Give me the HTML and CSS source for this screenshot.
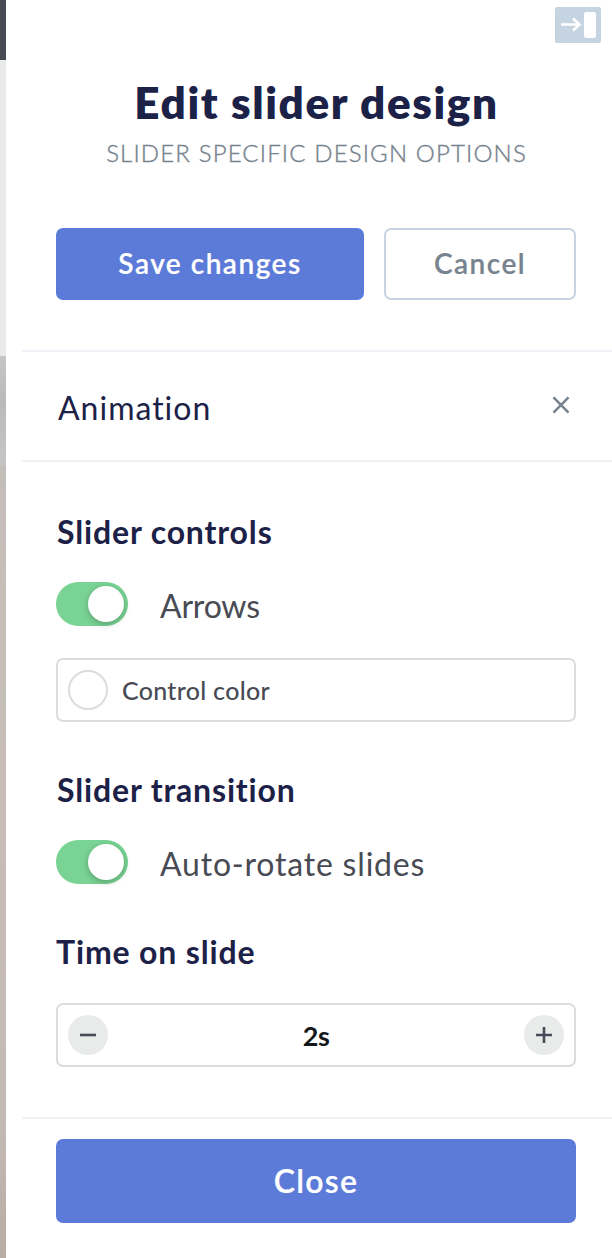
FILE: index.html
```html
<!DOCTYPE html>
<html lang="en">
<head>
  <meta charset="UTF-8">
  <meta name="viewport" content="width=device-width, initial-scale=1">
  <title>Edit slider design</title>
  <link rel="stylesheet" href="styles.css">
</head>

<body>
  <div class="page-edge"></div>

  <div class="panel">
    <div class="top-bar">
      <button type="button" class="collapse" aria-label="Collapse panel">
        <svg width="46" height="36" viewBox="0 0 46 36" fill="none">
          <path d="M6 17.5h18M18 11.5l6.5 6-6.5 6" stroke="#fff" stroke-width="2.6"/>
          <rect x="29" y="5" width="12" height="26" rx="2.5" fill="#fff"/>
        </svg>
      </button>
    </div>

    <header class="header">
      <h1>Edit slider design</h1>
      <p>SLIDER SPECIFIC DESIGN OPTIONS</p>
    </header>

    <div class="actions">
      <button type="button" class="button save">Save changes</button>
      <button type="button" class="button cancel">Cancel</button>
    </div>

    <div class="section-title">
      <span>Animation</span>
      <button type="button" class="icon-button" aria-label="Close section">
        <svg width="18" height="18" viewBox="0 0 18 18" fill="none">
          <path d="M1.5 1.3l15 15.4M16.5 1.3l-15 15.4" stroke="#77838f" stroke-width="2.5"/>
        </svg>
      </button>
    </div>

    <div class="section">
      <h2>Slider controls</h2>
      <label class="toggle-row">
        <span class="toggle"><span class="knob"></span></span>
        <span class="label arrows">Arrows</span>
      </label>
      <div class="field color-field">
        <span class="swatch"></span>
        <span>Control color</span>
      </div>

      <h2>Slider transition</h2>
      <label class="toggle-row">
        <span class="toggle"><span class="knob"></span></span>
        <span class="label">Auto-rotate slides</span>
      </label>

      <h2 class="time-title">Time on slide</h2>
      <div class="field stepper">
        <button type="button" class="step" aria-label="Decrease">
          <svg width="18" height="18" viewBox="0 0 18 18"><path d="M1 9h16" stroke="#484b57" stroke-width="2.6"/></svg>
        </button>
        <span class="value">2s</span>
        <button type="button" class="step" aria-label="Increase">
          <svg width="18" height="18" viewBox="0 0 18 18"><path d="M1 9h16M9 1v16" stroke="#484b57" stroke-width="2.6"/></svg>
        </button>
      </div>
    </div>

    <footer class="footer">
      <button type="button" class="button close">Close</button>
    </footer>
  </div>
</body>
</html>
```
FILE: styles.css
```css
* {
  box-sizing: border-box;
  margin: 0;
  padding: 0;
  font-family: Lato, sans-serif;
}

body {
  display: flex;
  height: 1258px;
  background: #fff;
  overflow: hidden;
}

button {
  border: none;
  background: none;
  cursor: pointer;
}

svg {
  display: block;
}

/* sliver of the site behind the panel */
.page-edge {
  width: 6px;
  background: linear-gradient(
    #484b54 0, #484b54 60px,
    #e9ebea 60px, #e9ebea 356px,
    #c6c6c6 356px, #b9babb 400px, #c5c5c5 465px,
    #c2beb8 466px, #c7bdbc 520px,
    #c6bfb7 600px, #c4bfb7 700px,
    #c8bdb8 750px, #c4bab5 1120px, #b8aca3 1258px
  );
}

.panel {
  flex: 1;
  padding-left: 16px;
}

.top-bar {
  display: flex;
  justify-content: flex-end;
  height: 76px;
  padding: 7px 11px 0 0;
}

.collapse {
  width: 46px;
  height: 36px;
  border-radius: 2px;
  background: #c6d3e1;
}

.header {
  height: 152px;
  padding-right: 1px;
  text-align: center;
}

.header h1 {
  font-size: 44px;
  line-height: 52px;
  font-weight: 800;
  letter-spacing: 1.6px;
  color: #1c2147;
}

.header p {
  margin-top: 11px;
  font-size: 24px;
  line-height: 28px;
  font-weight: 300;
  letter-spacing: 1.15px;
  color: #77838f;
  -webkit-text-stroke: 0.4px #77838f;
}

.actions {
  display: flex;
  gap: 20px;
  padding: 0 36px 50px 34px;
}

.button {
  height: 72px;
  padding-bottom: 3px;
  border-radius: 7px;
  font-size: 28px;
  font-weight: 600;
  letter-spacing: 1.5px;
  -webkit-text-stroke: 0.2px;
}

.save {
  width: 308px;
  background: #5c7ad8;
  color: #fff;
}

.cancel {
  width: 192px;
  border: 2px solid #c6d3e1;
  color: #77838f;
}

.section-title {
  display: flex;
  justify-content: space-between;
  height: 112px;
  padding: 36px 42px 0 36px;
  border-top: 2px solid #eff2f7;
  border-bottom: 2px solid #eff2f7;
  font-size: 32px;
  line-height: 40px;
  letter-spacing: 1px;
  color: #1c2147;
}

.icon-button {
  width: 18px;
  height: 18px;
  margin-top: 8px;
}

.section {
  height: 655px;
  padding: 50px 36px 0 34px;
}

.section h2 {
  margin-bottom: 30px;
  padding-left: 1px;
  font-size: 32px;
  line-height: 40px;
  font-weight: 700;
  letter-spacing: 0.85px;
  color: #1c2147;
}

.toggle-row {
  display: flex;
  align-items: center;
  gap: 32px;
  height: 44px;
}

.toggle {
  display: flex;
  justify-content: flex-end;
  width: 72px;
  height: 44px;
  padding: 4px;
  border-radius: 22px;
  background: #79d394;
}

.knob {
  width: 36px;
  height: 36px;
  border-radius: 50%;
  background: #fff;
  box-shadow: 0 2px 6px rgba(0, 0, 0, 0.25);
}

.label {
  padding-top: 4px;
  font-size: 32px;
  line-height: 40px;
  letter-spacing: 0.8px;
  color: #484b54;
}

.arrows {
  letter-spacing: -0.2px;
}

.field {
  display: flex;
  align-items: center;
  height: 64px;
  padding: 0 10px;
  border: 2px solid #dcdcdc;
  border-radius: 7px;
}

.color-field {
  gap: 14px;
  margin: 32px 0 48px;
  font-size: 25px;
  font-weight: 500;
  letter-spacing: 0.3px;
  color: #484b54;
}

.swatch {
  width: 40px;
  height: 40px;
  border: 2px solid #dcdcdc;
  border-radius: 50%;
}

.section .time-title {
  margin-top: 48px;
  margin-bottom: 31px;
  padding-left: 0;
}

.stepper {
  justify-content: space-between;
}

.step {
  display: flex;
  align-items: center;
  justify-content: center;
  width: 40px;
  height: 40px;
  border-radius: 50%;
  background: #e9ebea;
}

.value {
  font-size: 27px;
  font-weight: 700;
  letter-spacing: -0.5px;
  color: #13171a;
}

.footer {
  padding: 20px 36px 0 34px;
  border-top: 2px solid #eff2f7;
}

.close {
  width: 100%;
  height: 84px;
  padding-bottom: 1px;
  background: #5c7ad8;
  font-size: 32px;
  letter-spacing: 1.2px;
  color: #fff;
}
```
